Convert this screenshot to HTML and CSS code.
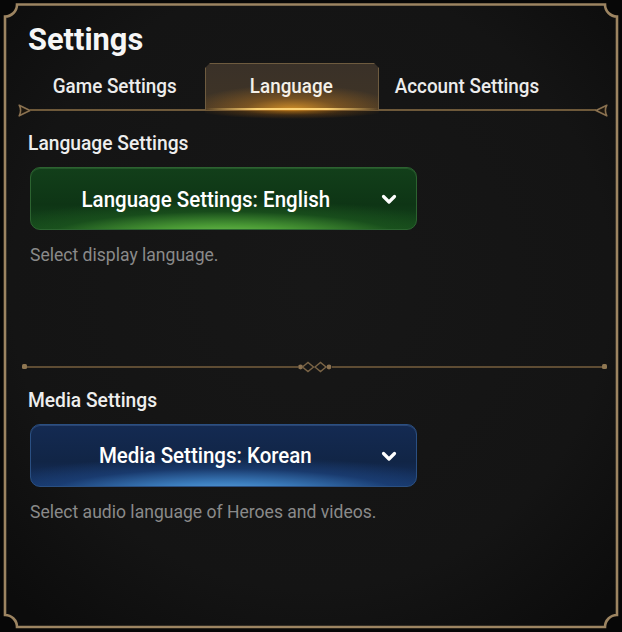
FILE: index.html
```html
<!DOCTYPE html>
<html lang="en">
<head>
<meta charset="utf-8">
<title>Settings</title>
<link rel="stylesheet" href="styles.css">
</head>
<body>
<div class="panel">
  <svg class="frame" width="622" height="632" viewBox="0 0 622 632" aria-hidden="true">
    <defs>
      <radialGradient id="bg" cx="50%" cy="45%" r="70%">
        <stop offset="0%" stop-color="#171717"/>
        <stop offset="70%" stop-color="#141414"/>
        <stop offset="100%" stop-color="#0c0c0c"/>
      </radialGradient>
    </defs>
    <path d="M17,4.5 H605 A12,12 0 0 0 617,16.5 V615 A12,12 0 0 0 605,627 H17 A12,12 0 0 0 5,615 V16.5 A12,12 0 0 0 17,4.5 Z" fill="url(#bg)" stroke="#9c8461" stroke-width="2.6"/>
  </svg>
  <div class="content">
    <h1 class="title">Settings</h1>
    <nav class="tabs">
      <div class="tab"><span class="cx">Game Settings</span></div>
      <div class="tab active"><span class="cx">Language</span></div>
      <div class="tab"><span class="cx">Account Settings</span></div>
    </nav>
    <div class="tab-rule">
      <svg class="tri" width="13" height="13" viewBox="0 0 13 13"><path d="M1.2,1.2 L12,6.5 L1.2,11.8 Q4,6.5 1.2,1.2 Z" fill="#1c160e" stroke="#8a7150" stroke-width="1.6" stroke-linejoin="round"/></svg>
      <div class="rule-line"></div>
      <svg class="tri" width="13" height="13" viewBox="0 0 13 13"><path d="M11.8,1.2 L1,6.5 L11.8,11.8 Q9,6.5 11.8,1.2 Z" fill="#1c160e" stroke="#8a7150" stroke-width="1.6" stroke-linejoin="round"/></svg>
    </div>

    <section class="group">
      <div class="label"><span class="lx">Language Settings</span></div>
      <div class="select green">
        <span class="select-text"><span class="cx">Language Settings: English</span></span>
        <svg class="chev" width="16" height="11" viewBox="0 0 16 11"><path d="M2.5,2.5 L8,8 L13.5,2.5" fill="none" stroke="#fff" stroke-width="3.2" stroke-linecap="round" stroke-linejoin="round"/></svg>
      </div>
      <div class="desc"><span class="lx">Select display language.</span></div>
    </section>

    <div class="divider">
      <span class="dot"></span>
      <span class="div-line"></span>
      <svg class="orn" width="34" height="12" viewBox="0 0 34 12"><circle cx="2.5" cy="6" r="2.4" fill="#8a7150"/><path d="M4.5,6 L10,1.5 L15.5,6 L10,10.5 Z M17,6 L22.5,1.5 L28,6 L22.5,10.5 Z" fill="none" stroke="#7a6446" stroke-width="1.4"/><circle cx="31" cy="6" r="2.4" fill="#8a7150"/></svg>
      <span class="div-line"></span>
      <span class="dot"></span>
    </div>

    <section class="group second">
      <div class="label"><span class="lx">Media Settings</span></div>
      <div class="select blue">
        <span class="select-text"><span class="cx">Media Settings: Korean</span></span>
        <svg class="chev" width="16" height="11" viewBox="0 0 16 11"><path d="M2.5,2.5 L8,8 L13.5,2.5" fill="none" stroke="#fff" stroke-width="3.2" stroke-linecap="round" stroke-linejoin="round"/></svg>
      </div>
      <div class="desc"><span class="lx">Select audio language of Heroes and videos.</span></div>
    </section>
  </div>
</div>
</body>
</html>
```
FILE: styles.css
```css
* { box-sizing: border-box; }
html, body { margin: 0; padding: 0; }
body {
  background: #070707;
  font-family: Roboto, "Noto Sans", "Liberation Sans", sans-serif;
  color: #f1f1f1;
}
.panel {
  position: relative;
  width: 622px;
  height: 632px;
  overflow: hidden;
}
.frame {
  position: absolute;
  left: 0;
  top: 0;
  z-index: 0;
}
.content {
  position: relative;
  z-index: 1;
  padding-top: 22px;
}
/* slightly condensed text, like the reference's font */
.cx, .lx {
  display: inline-block;
  transform: scaleX(0.915);
  white-space: nowrap;
}
.cx { transform-origin: 50% 50%; }
.lx { transform-origin: 0 50%; }

.title {
  margin: 0 0 5px 28px;
  font-size: 30.8px;
  line-height: 36px;
  font-weight: 700;
  color: #f6f6f6;
}
.tabs {
  display: flex;
  height: 47px;
  padding-left: 27px;
  position: relative;
  z-index: 2;
}
.tab {
  width: 176px;
  display: flex;
  align-items: center;
  justify-content: center;
  padding-bottom: 2px;
  font-size: 20.6px;
  font-weight: 500;
  color: #ececec;
  position: relative;
}
.tab.active {
  color: #f4f0e8;
}
.tab.active::before {
  content: "";
  position: absolute;
  left: 2px;
  right: 0;
  top: 0;
  bottom: 0;
  background:
    radial-gradient(ellipse 62% 55% at 50% 100%, rgba(236,160,40,0.85) 0%, rgba(190,120,30,0.45) 45%, rgba(120,80,30,0) 100%),
    linear-gradient(#3a3128, #3f3426);
  border: 1px solid #6e5b3f;
  border-bottom: none;
  clip-path: polygon(5px 0, calc(100% - 5px) 0, 100% 5px, 100% 100%, 0 100%, 0 5px);
  z-index: -1;
}
.tab.active::after {
  content: "";
  position: absolute;
  left: 2px;
  right: 0;
  bottom: -9px;
  height: 11px;
  background:
    linear-gradient(to right, rgba(240,190,80,0) 0%, rgba(255,214,120,0.95) 30%, rgba(255,214,120,0.95) 70%, rgba(240,190,80,0) 100%) top / 100% 2px no-repeat,
    radial-gradient(ellipse 55% 100% at 50% 0%, rgba(210,130,20,0.75) 0%, rgba(150,90,20,0.3) 55%, rgba(0,0,0,0) 100%) 0 2px / 100% 9px no-repeat;
}
.tab-rule {
  display: flex;
  align-items: center;
  height: 13px;
  margin: -6.5px 0 0 18px;
  width: 590px;
  position: relative;
  z-index: 1;
}
.rule-line {
  flex: 1;
  height: 2px;
  background: #6e593a;
  margin: 0 -1px;
}
.tri { display: block; flex: none; }

.group {
  margin-top: 14.5px;
  padding-left: 28px;
}
.label {
  font-size: 21px;
  font-weight: 500;
  line-height: 24px;
  color: #eeeeee;
}
.select {
  margin: 12px 0 0 2px;
  width: 387px;
  height: 63px;
  border-radius: 10px;
  display: flex;
  align-items: center;
  position: relative;
  padding-right: 36px;
}
.select-text {
  flex: 1;
  text-align: center;
  font-size: 22.4px;
  font-weight: 500;
  color: #ffffff;
}
.chev {
  position: absolute;
  right: 19px;
  top: 26px;
}
.green {
  border: 1px solid #2c6330;
  background:
    radial-gradient(ellipse 80% 75% at 50% 115%, #7fd05a 0%, #4a9a35 28%, rgba(30,90,30,0.55) 58%, rgba(20,60,25,0) 85%),
    linear-gradient(#123f1a, #0e3515 60%, #14461c);
  box-shadow: inset 0 1px 0 rgba(90,160,90,0.25);
}
.blue {
  border: 1px solid #2a4f82;
  background:
    radial-gradient(ellipse 80% 75% at 50% 115%, #67b0ea 0%, #3b7cbc 28%, rgba(30,70,130,0.55) 58%, rgba(20,45,90,0) 85%),
    linear-gradient(#142a52, #112546 60%, #153262);
  box-shadow: inset 0 1px 0 rgba(110,150,210,0.25);
}
.desc {
  margin: 14px 0 0 2px;
  font-size: 19.2px;
  line-height: 22px;
  color: #8a8a8a;
}
.divider {
  display: flex;
  align-items: center;
  margin: 94.5px 0 0 22px;
  width: 585px;
  height: 12px;
}
.dot {
  width: 5px;
  height: 5px;
  border-radius: 1.5px;
  background: #8f7752;
  flex: none;
}
.div-line {
  flex: 1;
  height: 2px;
  background: #5e4c33;
}
.orn { display: block; flex: none; }
.group.second {
  margin-top: 15px;
}
```
